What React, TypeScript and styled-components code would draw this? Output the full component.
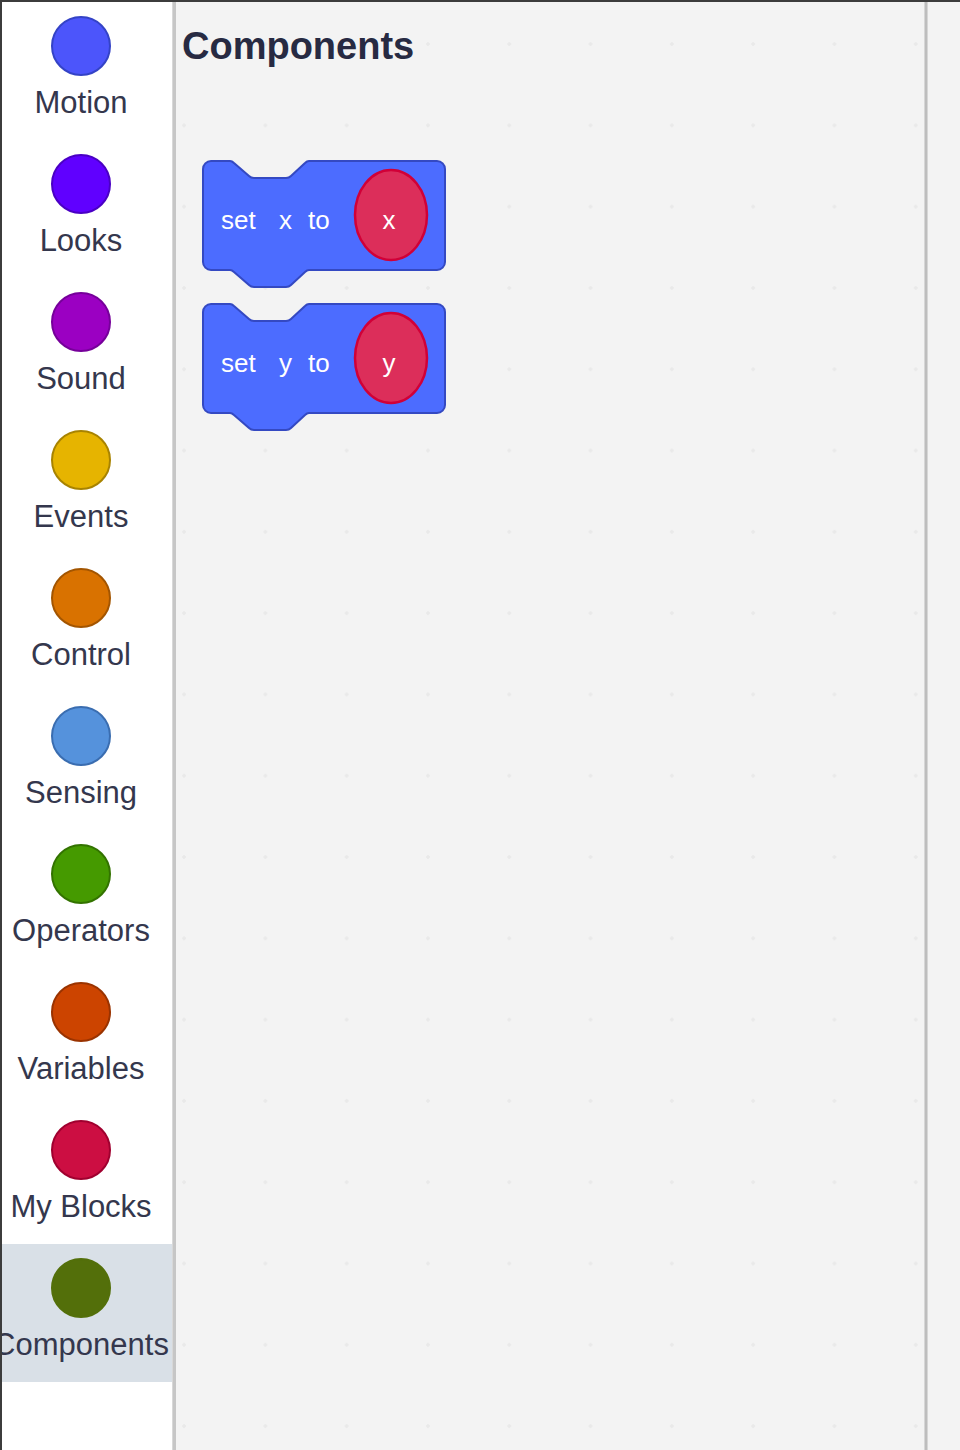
import React from 'react';
import styled, { createGlobalStyle } from 'styled-components';

const GlobalStyle = createGlobalStyle`
  html, body {
    margin: 0;
    padding: 0;
    background: #f3f3f3;
  }
  body {
    font-family: "Liberation Sans", Arial, Helvetica, sans-serif;
  }
`;

const PAGE = styled.div`
  display: flex;
  height: 1450px;
  box-sizing: border-box;
  border-top: 2px solid #3c3c3c;
  border-left: 2px solid #3c3c3c;
  overflow: hidden;
`;

const MENU = styled.div`
  width: 170px;
  flex-shrink: 0;
  background: #ffffff;
  display: flex;
  flex-direction: column;
`;

const ITEM = styled.div<{ $selected?: boolean }>`
  height: 138px;
  flex-shrink: 0;
  display: flex;
  flex-direction: column;
  align-items: center;
  padding: 14px 12px 0 0;
  box-sizing: border-box;
  background: ${p => (p.$selected ? '#d9e0e7' : 'transparent')};
`;

const BUBBLE = styled.div<{ $fill: string; $edge: string }>`
  width: 60px;
  height: 60px;
  border-radius: 50%;
  box-sizing: border-box;
  background: ${p => p.$fill};
  border: 2px solid ${p => p.$edge};
`;

const LABEL = styled.div`
  margin-top: 9px;
  font-size: 31px;
  line-height: 36px;
  color: #34374d;
  white-space: nowrap;
`;

const SCROLL = styled.div`
  width: 3px;
  flex-shrink: 0;
  background: #c6c6c6;
  border-left: 1px solid #d8d8d8;
`;

const WORKSPACE = styled.div`
  width: 748px;
  flex-shrink: 0;
  padding: 22px 0 0 6px;
  box-sizing: border-box;
  background-color: #f3f3f3;
  background-image: radial-gradient(circle, #e9e9e9 0, #e9e9e9 1.5px, transparent 2.1px);
  background-size: 81.3px 81.3px;
  background-position: -32.6px 1.4px;
`;

const HEADING = styled.div`
  font-size: 38px;
  line-height: 44px;
  font-weight: 700;
  color: #272a42;
`;

const STACK = styled.div`
  margin: 92px 0 0 20px;
  display: flex;
  flex-direction: column;
  gap: 15px;
`;

const DIVIDER = styled.div`
  width: 4px;
  flex-shrink: 0;
  background: #bdbdbd;
  border-left: 1px solid #d6d6d6;
  border-right: 1px solid #d6d6d6;
  box-sizing: border-box;
`;

const REST = styled.div`
  flex: 1;
  background: #f3f3f3;
`;

const categories = [
  { name: 'Motion', fill: '#4c55fb', edge: '#3443c6' },
  { name: 'Looks', fill: '#6000ff', edge: '#4a00c4' },
  { name: 'Sound', fill: '#9b00c2', edge: '#76009a' },
  { name: 'Events', fill: '#e6b400', edge: '#a88300' },
  { name: 'Control', fill: '#d97200', edge: '#a35500' },
  { name: 'Sensing', fill: '#5592dc', edge: '#3a6db0' },
  { name: 'Operators', fill: '#459a00', edge: '#337300' },
  { name: 'Variables', fill: '#cc4400', edge: '#9a3300' },
  { name: 'My Blocks', fill: '#cc0e42', edge: '#a0002f' },
  { name: 'Components', fill: '#536f0a', edge: '#536f0a' },
];

const blockPath =
  'M 1 9 A 8 8 0 0 1 9 1 H 28 C 30 1 31 2 32 3 L 47 16 C 48 17 50 18 52 18 H 84 C 86 18 88 17 89 16 L 103 3 C 104 2 105 1 107 1 H 235 A 8 8 0 0 1 243 9 V 102 A 8 8 0 0 1 235 110 H 107 C 105 110 104 111 103 112 L 89 125 C 88 126 86 127 84 127 H 52 C 50 127 48 126 47 125 L 32 112 C 31 111 30 110 28 110 H 9 A 8 8 0 0 1 1 102 Z';

const SetBlock: React.FC<{ axis: string }> = ({ axis }) => (
  <svg width="244" height="128" viewBox="0 0 244 128">
    <path d={blockPath} fill="#4c6cff" stroke="#3449c2" strokeWidth="2" />
    <g fill="#ffffff" fontFamily='"Liberation Sans", Arial, sans-serif' fontSize="26">
      <text x="19" y="69">set</text>
      <text x="77" y="69">{axis}</text>
      <text x="106" y="69">to</text>
    </g>
    <ellipse cx="189" cy="55" rx="36" ry="45" fill="#dc2e5a" stroke="#d10037" strokeWidth="2.5" />
    <text x="187" y="69" fill="#ffffff" fontFamily='"Liberation Sans", Arial, sans-serif' fontSize="26" textAnchor="middle">
      {axis}
    </text>
  </svg>
);

const App: React.FC = () => {
  return (
    <>
      <GlobalStyle />
      <PAGE>
        <MENU>
          {categories.map(c => (
            <ITEM key={c.name} $selected={c.name === 'Components'}>
              <BUBBLE $fill={c.fill} $edge={c.edge} />
              <LABEL>{c.name}</LABEL>
            </ITEM>
          ))}
        </MENU>
        <SCROLL />
        <WORKSPACE>
          <HEADING>Components</HEADING>
          <STACK>
            <SetBlock axis="x" />
            <SetBlock axis="y" />
          </STACK>
        </WORKSPACE>
        <DIVIDER />
        <REST />
      </PAGE>
    </>
  );
};

export default App;
